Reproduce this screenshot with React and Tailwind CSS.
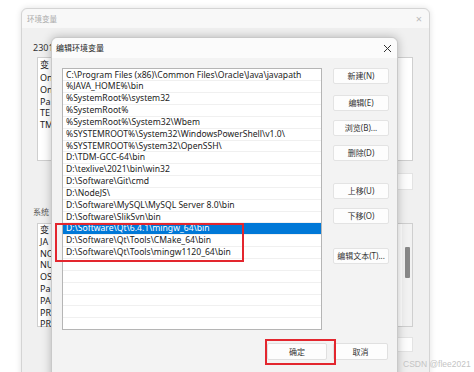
import React from "react";

const rows = [
  "C:\\Program Files (x86)\\Common Files\\Oracle\\Java\\javapath",
  "%JAVA_HOME%\\bin",
  "%SystemRoot%\\system32",
  "%SystemRoot%",
  "%SystemRoot%\\System32\\Wbem",
  "%SYSTEMROOT%\\System32\\WindowsPowerShell\\v1.0\\",
  "%SYSTEMROOT%\\System32\\OpenSSH\\",
  "D:\\TDM-GCC-64\\bin",
  "D:\\texlive\\2021\\bin\\win32",
  "D:\\Software\\Git\\cmd",
  "D:\\NodeJS\\",
  "D:\\Software\\MySQL\\MySQL Server 8.0\\bin",
  "D:\\Software\\SlikSvn\\bin",
  "D:\\Software\\Qt\\6.4.1\\mingw_64\\bin",
  "D:\\Software\\Qt\\Tools\\CMake_64\\bin",
  "D:\\Software\\Qt\\Tools\\mingw1120_64\\bin",
  "", "", "", "", "", "",
];

const userVars = ["变", "On", "On", "Pa", "TE", "TM"];
const sysVars = ["变", "JA", "NC", "NU", "OS", "Pa", "PA", "PR", "PR"];

function Btn({ children, className = "" }) {
  return (
    <div
      className={
        "h-[16px] w-[56px] flex items-center justify-center bg-[#fdfdfd] border border-[#e3e3e3] rounded-[2px] text-[8px] leading-[10px] text-[#333] " +
        className
      }
    >
      {children}
    </div>
  );
}

export default function App() {
  const font = "font-['Noto_Sans','Noto_Sans_CJK_SC',sans-serif]";
  return (
    <div className={"relative w-[474px] h-[372px] bg-white overflow-hidden " + font}>
      {/* back window */}
      <div className="absolute left-[21px] top-[8px] w-[409px] h-[380px] bg-[#f0f0f0] border border-[#d4d4d4] rounded-t-[6px] shadow-[0_0_6px_rgba(0,0,0,0.12)] flex flex-col">
        <div className="h-[19px] bg-[#f8f8f8] rounded-t-[6px] flex items-center justify-between pl-[5px] pr-[7px]">
          <span className="text-[7.5px] leading-[10px] text-[#aaa]">环境变量</span>
          <span className="text-[11px] text-[#bbb] leading-none">×</span>
        </div>
        <div className="flex-1 pl-[15px] pr-[16px] flex flex-col">
          <div className="mt-[14px] text-[9px] text-[#333] leading-[12px] ml-[-4px]">2301</div>
          <div className="mt-[3px] h-[104px] bg-white border border-[#cfcfcf] flex flex-col pt-[1px] pl-[2px]">
            {userVars.map((v, i) => (
              <div key={i} className={"text-[9px] text-[#222] leading-[11.8px] " + (i === 0 ? "h-[13px]" : "h-[11.8px]")}>
                {v}
              </div>
            ))}
          </div>
          <div className="mt-[12px] flex justify-end gap-[6px]">
            <div className="h-[17px] w-[40px] bg-[#fdfdfd] border border-[#e3e3e3]" />
          </div>
          <div className="mt-[16px] text-[8px] text-[#555] leading-[12px] ml-[-4px]">系统</div>
          <div className="mt-[5px] h-[104px] bg-white border border-[#cfcfcf] flex">
            <div className="flex-1 flex flex-col pl-[2px]">
              {sysVars.map((v, i) => (
                <div key={i} className="text-[9px] text-[#222] leading-[11.8px] h-[11.8px]">
                  {v}
                </div>
              ))}
            </div>
            <div className="w-[10px] bg-[#f2f2f2] flex justify-center pt-[23px]">
              <div className="w-[5px] h-[31px] bg-[#888] rounded-[1px]" />
            </div>
          </div>
          <div className="mt-[10px] flex justify-end">
            <div className="h-[15px] w-[40px] bg-[#fdfdfd] border border-[#e3e3e3]" />
          </div>
        </div>
      </div>

      {/* front dialog */}
      <div className="absolute left-[51px] top-[37px] w-[347px] h-[345px] bg-[#f3f3f3] border border-[#c9c9c9] rounded-t-[6px] shadow-[0_0_10px_rgba(0,0,0,0.25)] flex flex-col">
        <div className="h-[20px] bg-[#fbfbfb] rounded-t-[6px] flex items-center justify-between pl-[4px] pr-[5px]">
          <span className="text-[8px] leading-[10px] text-[#222]">编辑环境变量</span>
          <svg width="9" height="9" viewBox="0 0 9 9">
            <path d="M1 1L8 8M8 1L1 8" stroke="#333" strokeWidth="1" />
          </svg>
        </div>
        <div className="flex pl-[10px] pt-[10px] gap-[11px]">
          <div className="w-[260px] h-[262px] bg-white border border-[#b5b5b5] flex flex-col pt-[0.5px] overflow-hidden">
            {rows.map((r, i) => (
              <div
                key={i}
                className={
                  "h-[11.85px] shrink-0 pl-[3px] text-[8.6px] leading-[10.8px] whitespace-nowrap overflow-hidden border-b border-[#f0f0f0] " +
                  (i === 13 ? "bg-[#0078d7] text-white" : "text-[#222]")
                }
              >
                {r}
              </div>
            ))}
          </div>
          <div className="flex flex-col">
            <Btn>新建(N)</Btn>
            <Btn className="mt-[11px]">编辑(E)</Btn>
            <Btn className="mt-[9px]">浏览(B)...</Btn>
            <Btn className="mt-[9px]">删除(D)</Btn>
            <Btn className="mt-[22px]">上移(U)</Btn>
            <Btn className="mt-[9px]">下移(O)</Btn>
            <Btn className="mt-[24px]">编辑文本(T)...</Btn>
          </div>
        </div>
        <div className="flex justify-end gap-[6px] pr-[9px] mt-[13px]">
          <div className="h-[17px] w-[60px] flex items-center justify-center bg-[#fdfdfd] border border-[#e0e0e0] rounded-[2px] text-[8px] leading-[10px] text-[#333]">确定</div>
          <div className="h-[17px] w-[55px] flex items-center justify-center bg-[#fdfdfd] border border-[#e0e0e0] rounded-[2px] text-[8px] leading-[10px] text-[#333]">取消</div>
        </div>
      </div>

      {/* annotations */}
      <div className="absolute left-[55px] top-[223px] w-[189px] h-[39px] border-2 border-[#e3262e]" />
      <div className="absolute left-[265px] top-[339px] w-[71px] h-[26px] border-2 border-[#e3262e]" />
      <div className="absolute left-[403px] top-[358px] text-[8.5px] text-[#c4c4c4] leading-[12px] font-['Liberation_Sans',sans-serif]">
        CSDN @flee2021
      </div>
    </div>
  );
}
